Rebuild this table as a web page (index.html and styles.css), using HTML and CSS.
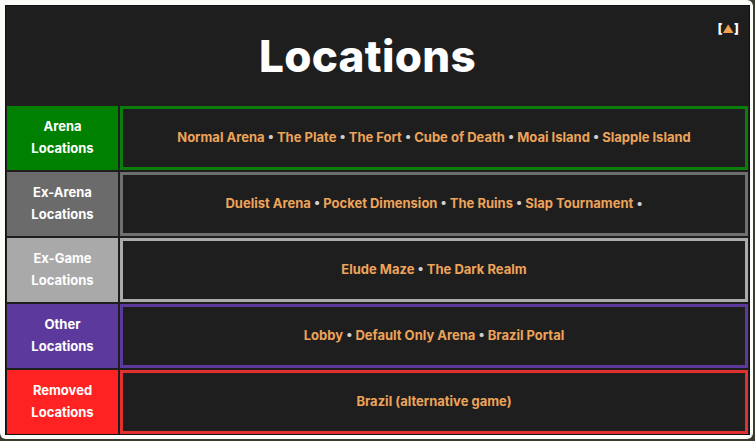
FILE: index.html
```html
<!DOCTYPE html>
<html>
<head>
<meta charset="utf-8">
<link rel="stylesheet" href="styles.css">
</head>
<body>
<div class="frame">
  <div class="box">
    <div class="header">
      <h1 class="title">Locations</h1>
      <span class="toggle">[<span class="tri">▲</span>]</span>
    </div>
    <div class="rows">
      <div class="row green">
        <div class="label">Arena<br>Locations</div>
        <div class="list"><span>Normal Arena <span class="dot">•</span> The Plate <span class="dot">•</span> The Fort <span class="dot">•</span> Cube of Death <span class="dot">•</span> Moai Island <span class="dot">•</span> Slapple Island</span></div>
      </div>
      <div class="row grey">
        <div class="label">Ex-Arena<br>Locations</div>
        <div class="list"><span>Duelist Arena <span class="dot">•</span> Pocket Dimension <span class="dot">•</span> The Ruins <span class="dot">•</span> Slap Tournament <span class="dot">•</span></span></div>
      </div>
      <div class="row light">
        <div class="label">Ex-Game<br>Locations</div>
        <div class="list"><span>Elude Maze <span class="dot">•</span> The Dark Realm</span></div>
      </div>
      <div class="row purple">
        <div class="label">Other<br>Locations</div>
        <div class="list"><span>Lobby <span class="dot">•</span> Default Only Arena <span class="dot">•</span> Brazil Portal</span></div>
      </div>
      <div class="row red">
        <div class="label">Removed<br>Locations</div>
        <div class="list"><span>Brazil (alternative game)</span></div>
      </div>
    </div>
  </div>
</div>
</body>
</html>
```

FILE: styles.css
```css
html, body {
  margin: 0;
  padding: 0;
  background: #3a3a2e;
}
body {
  width: 755px;
  height: 441px;
  overflow: hidden;
  font-family: Inter, "Noto Sans", sans-serif;
}
.frame {
  box-sizing: border-box;
  width: 753px;
  height: 439px;
  background: #fbfbf8;
  border-radius: 0 6px 6px 6px;
  padding: 5px 3px 4px 5px;
}
.box {
  box-sizing: border-box;
  height: 100%;
  background: #1e1e1e;
  border: 1px solid #111;
  display: flex;
  flex-direction: column;
}
.header {
  position: relative;
  height: 100px;
  display: flex;
  align-items: center;
  justify-content: center;
  padding-right: 20px;
  padding-bottom: 1px;
  box-sizing: border-box;
}
.title {
  margin: 0;
  color: #ffffff;
  font-size: 44px;
  font-weight: 800;
  letter-spacing: 0.3px;
}
.toggle {
  position: absolute;
  right: 10px;
  top: 14px;
  color: #ffffff;
  font-size: 13px;
  font-weight: 800;
}
.tri {
  color: #f0a050;
  font-size: 11px;
}
.rows {
  display: flex;
  flex-direction: column;
  gap: 2px;
  flex: 1;
  padding: 0 1px;
}
.row {
  display: grid;
  grid-template-columns: 111px 1fr;
  column-gap: 2px;
  height: 64px;
}
.label {
  color: #ffffff;
  font-size: 13px;
  font-weight: 700;
  line-height: 22px;
  display: flex;
  align-items: center;
  justify-content: center;
  text-align: center;
  padding-bottom: 2px;
  box-sizing: border-box;
}
.list {
  box-sizing: border-box;
  border: 3px solid;
  color: #eda45a;
  font-size: 13px;
  font-weight: 700;
  display: flex;
  align-items: center;
  justify-content: center;
  text-align: center;
  padding-bottom: 3px;
}
.dot {
  color: #d0d0d0;
}
.green .label { background: #008000; }
.green .list { border-color: #0b7d0b; }
.grey .label { background: #6b6b6b; }
.grey .list { border-color: #6f6f6f; }
.light .label { background: #a9a9a9; }
.light .list { border-color: #aaaaaa; }
.purple .label { background: #5c3a9d; }
.purple .list { border-color: #5c3a9d; }
.red .label { background: #ff2222; }
.red .list { border-color: #e23030; }
```
